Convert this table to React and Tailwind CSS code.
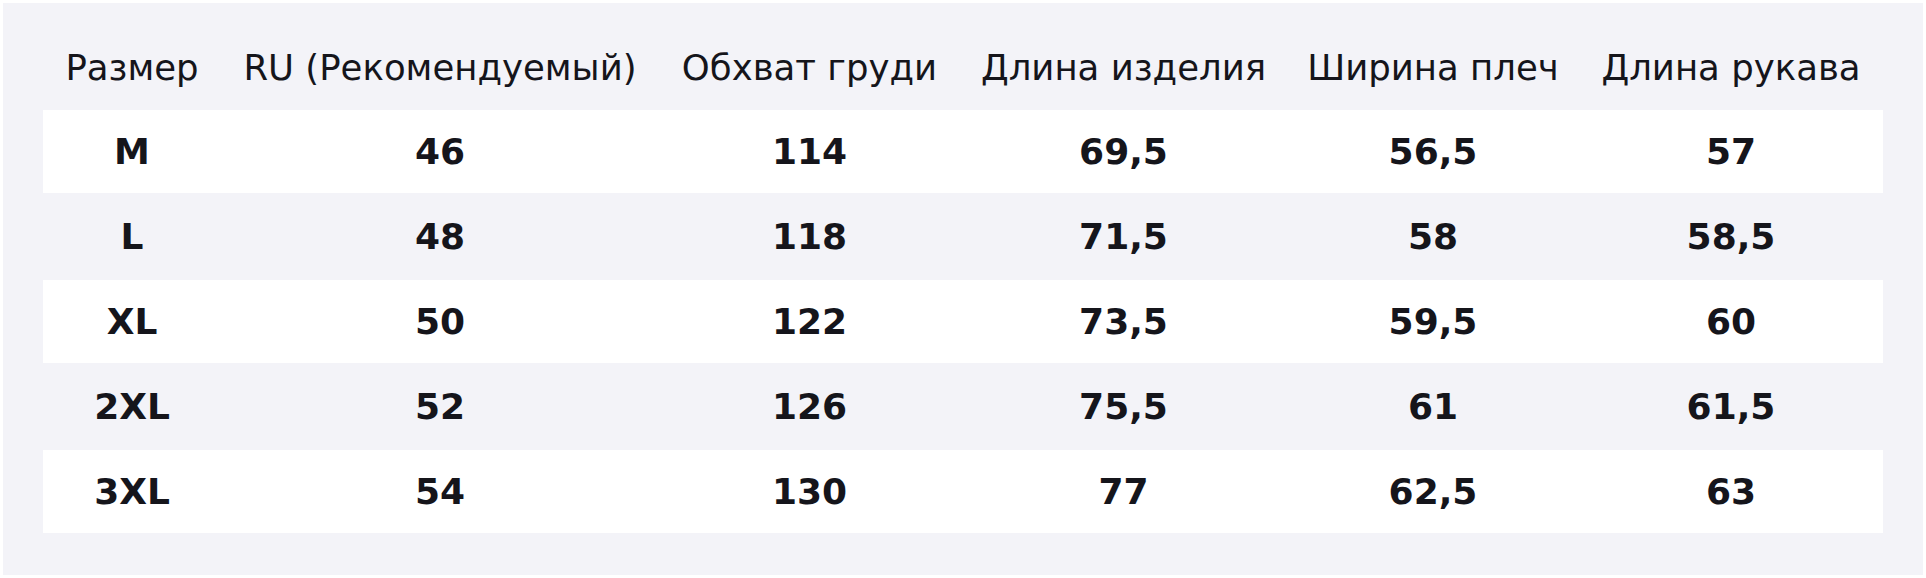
const headers = ["Размер", "RU (Рекомендуемый)", "Обхват груди", "Длина изделия", "Ширина плеч", "Длина рукава"];

const rows = [
  ["M", "46", "114", "69,5", "56,5", "57"],
  ["L", "48", "118", "71,5", "58", "58,5"],
  ["XL", "50", "122", "73,5", "59,5", "60"],
  ["2XL", "52", "126", "75,5", "61", "61,5"],
  ["3XL", "54", "130", "77", "62,5", "63"],
];

const cols = "grid grid-cols-[178px_438px_301px_327px_292px_304px]";

export default function App() {
  return (
    <div className="bg-white p-[3px] w-[1926px] h-[578px]" style={{ fontFamily: '"DejaVu Sans", sans-serif' }}>
      <div className="bg-[#f3f3f8] h-[572px] px-10 pt-[22px] text-[#15151b] text-[36px]">
        <div className={`${cols} h-[85px] items-center text-center text-[35.5px]`}>
          {headers.map((h) => (
            <div key={h} className="whitespace-nowrap">{h}</div>
          ))}
        </div>
        {rows.map((r, i) => (
          <div
            key={r[0]}
            className={`${cols} items-center text-center font-bold ${i % 2 === 0 ? "bg-white h-[83px]" : "h-[87px]"}`}
          >
            {r.map((c, j) => (
              <div key={j}>{c}</div>
            ))}
          </div>
        ))}
      </div>
    </div>
  );
}
